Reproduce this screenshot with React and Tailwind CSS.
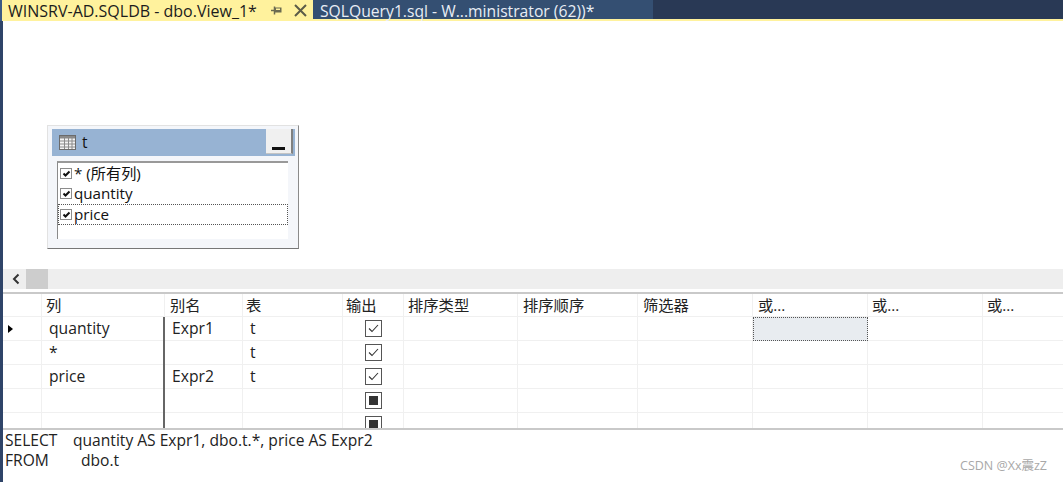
import React from 'react';

const columns = [
  { label: '列', width: 'w-[123px]', pad: 'pl-[4px]' },
  { label: '别名', width: 'w-[78px]', pad: 'pl-[5px]' },
  { label: '表', width: 'w-[100px]', pad: 'pl-[3px]' },
  { label: '输出', width: 'w-[61px]', pad: 'pl-[3px]' },
  { label: '排序类型', width: 'w-[114px]', pad: 'pl-[4px]' },
  { label: '排序顺序', width: 'w-[120px]', pad: 'pl-[5px]' },
  { label: '筛选器', width: 'w-[115px]', pad: 'pl-[5px]' },
  { label: '或...', width: 'w-[115px]', pad: 'pl-[5px]' },
  { label: '或...', width: 'w-[115px]', pad: 'pl-[4px]' },
  { label: '或...', width: 'w-[81px]', pad: 'pl-[4px]' },
];

const rows = [
  { column: 'quantity', alias: 'Expr1', table: 't', output: 'checked', current: true },
  { column: '*', alias: '', table: 't', output: 'checked' },
  { column: 'price', alias: 'Expr2', table: 't', output: 'checked' },
  { column: '', alias: '', table: '', output: 'mixed' },
  { column: '', alias: '', table: '', output: 'mixed' },
];

const TableIcon = () => (
  <svg width="17" height="15" viewBox="0 0 17 15" className="shrink-0">
    <rect x="0.5" y="0.5" width="16" height="14" fill="#f4f4f4" stroke="#6b6b6b" />
    <rect x="1" y="1" width="15" height="2.500" fill="#8a8a8a" />
    <path d="M5.500 1v13M9.500 1v13M13 1v13M1 6h15M1 9h15M1 12h15" stroke="#8a8a8a" />
  </svg>
);

const SmallCheck = () => (
  <span className="w-[12px] h-[11px] shrink-0 border border-[#8c8c8c] bg-white flex items-center justify-center">
    <svg width="9" height="9" viewBox="0 0 9 9">
      <path d="M1.500 4.500 3.500 6.500 7.500 2.500" fill="none" stroke="#111" strokeWidth="2" />
    </svg>
  </span>
);

const OutputBox = ({ state }) => (
  <span className="w-[17px] h-[17px] border border-[#555] bg-white flex items-center justify-center">
    {state === 'checked' ? (
      <svg width="13" height="13" viewBox="0 0 13 13">
        <path d="M2 6.500 5 9.500 11 3" fill="none" stroke="#333" strokeWidth="1.100" />
      </svg>
    ) : (
      <span className="w-[9px] h-[9px] bg-[#333]" />
    )}
  </span>
);

const FieldRow = ({ label, focused }) => (
  <div className={`h-[20.5px] flex items-center border ${focused ? 'border-dotted border-[#555]' : 'border-transparent'} pl-[1px]`}>
    <SmallCheck />
    <span className="ml-[2px] text-[15.2px] leading-none text-[#111]">{label}</span>
  </div>
);

const App = () => {
  return (
    <div className='w-[1063px] h-[482px] overflow-hidden bg-white flex flex-col font-["Open_Sans","Noto_Sans_CJK_SC",sans-serif]'>
      {/* document tabs */}
      <div className="h-[21px] shrink-0 flex bg-[#fff29d]">
        <div className="w-[2px] bg-[#3c5a85]" />
        <div className="w-[311px] flex items-center pl-[6px] text-[16px] text-[#1c1c1c] whitespace-nowrap">
          <span>WINSRV-AD.SQLDB - dbo.View_1*</span>
          <svg width="11" height="9" viewBox="0 0 11 9" className="ml-[14px] shrink-0">
            <path d="M0 4.500h4" fill="none" stroke="#6b6b50" strokeWidth="1.500" />
            <path d="M3.500 0.500v8" fill="none" stroke="#6b6b50" strokeWidth="1.500" />
            <rect x="4" y="1.500" width="6.500" height="5" fill="#6b6b50" />
            <rect x="5" y="2.500" width="4" height="1.500" fill="#fff29d" />
          </svg>
          <svg width="13" height="13" viewBox="0 0 13 13" className="ml-[12px] shrink-0">
            <path d="M1 1 12 12M12 1 1 12" fill="none" stroke="#5c5c48" strokeWidth="2" />
          </svg>
        </div>
        <div className="w-[340px] h-[21px] bg-[#344f72] border-b-2 border-[#fff29d] flex items-start pl-[7px] text-[15.7px] text-[#e8edf5] whitespace-nowrap">
          SQLQuery1.sql - W...ministrator (62))*
        </div>
        <div className="flex-1 h-[19px] bg-[#293955]" />
      </div>

      <div className="flex-1 min-h-0 flex border-l-[3px] border-[#2f4468]">
        <div className="flex-1 min-w-0 flex flex-col">
          {/* diagram pane */}
          <div className="h-[248px] shrink-0 relative">
            <div className="absolute left-[44px] top-[104px] w-[252px] h-[124px] bg-[#f4f6fa] border border-[#e2e2e2] border-r-[#8a8a8a] border-b-[#777] pt-[3px] pl-[4px] pr-[3px]">
              <div className="h-[27px] bg-[#97b3d3] flex items-center pl-[7px] relative">
                <TableIcon />
                <span className="ml-[6px] text-[15.5px] text-[#111]">t</span>
                <div className="absolute right-[2px] top-0 w-[27px] h-[25px] bg-[#f0f0f0] border-r-2 border-b border-r-[#808080] border-b-[#c4c4c4] flex items-end justify-center pb-[3px]">
                  <span className="w-[13px] h-[3px] bg-[#111]" />
                </div>
              </div>
              <div className="mt-[5px] ml-[5px] mr-[7px] h-[78px] bg-white border-l border-t-2 border-[#8a8a8a] border-t-[#999]">
                <FieldRow label="* (所有列)" />
                <FieldRow label="quantity" />
                <FieldRow label="price" focused />
              </div>
            </div>
          </div>

          {/* horizontal scrollbar */}
          <div className="h-[20px] shrink-0 bg-[#eeeeee] flex items-center">
            <svg width="10" height="12" viewBox="0 0 10 12" className="ml-[8px] shrink-0">
              <path d="M7.500 1.500 3 6l4.500 4.500" fill="none" stroke="#333" strokeWidth="2" />
            </svg>
            <span className="ml-[5px] w-[22px] h-[20px] bg-[#cdcdcd]" />
          </div>

          {/* criteria grid */}
          <div className="mt-[3px] h-[138px] shrink-0 overflow-hidden border-y-2 border-[#c9c9c9] text-[15.7px] text-[#222]">
            <div className="flex h-[23px] border-b border-[#f0f0f0] text-[15.3px]">
              <div className="w-[39px] shrink-0 border-r border-[#f0f0f0]" />
              {columns.map((col, i) => (
                <div key={i} className={`${col.width} shrink-0 ${col.pad} flex items-center border-r border-[#f0f0f0] whitespace-nowrap`}>
                  {col.label}
                </div>
              ))}
            </div>
            {rows.map((row, i) => (
              <div key={i} className="flex h-[24px]">
                <div className="w-[39px] shrink-0 border-r border-b border-[#f0f0f0] flex items-center pl-[5px]">
                  {row.current && <span className="w-0 h-0 border-y-[4px] border-y-transparent border-l-[5px] border-l-black" />}
                </div>
                {/* the heavy divider runs unbroken, so the row line sits on an inner box */}
                <div className="w-[123px] shrink-0 border-r-2 border-[#666]">
                  <div className="h-full pl-[7px] flex items-center border-b border-[#f0f0f0]">{row.column}</div>
                </div>
                <div className="w-[78px] shrink-0 pl-[7px] flex items-center border-r border-b border-[#f0f0f0]">{row.alias}</div>
                <div className="w-[100px] shrink-0 pl-[7px] flex items-center border-r border-b border-[#f0f0f0]">{row.table}</div>
                <div className="w-[61px] shrink-0 flex items-center justify-center border-r border-b border-[#f0f0f0]">
                  <OutputBox state={row.output} />
                </div>
                <div className="w-[114px] shrink-0 border-r border-b border-[#f0f0f0]" />
                <div className="w-[120px] shrink-0 border-r border-b border-[#f0f0f0]" />
                <div className="w-[115px] shrink-0 border-r border-b border-[#f0f0f0]" />
                <div className={`w-[115px] shrink-0 ${row.current ? 'bg-[#e8ecf0] border border-dotted border-[#555]' : 'border-r border-b border-[#f0f0f0]'}`} />
                <div className="w-[115px] shrink-0 border-r border-b border-[#f0f0f0]" />
                <div className="flex-1 border-b border-[#f0f0f0]" />
              </div>
            ))}
          </div>

          {/* sql pane */}
          <div className="flex-1 relative pl-[2px] pt-[1px] text-[15.6px] leading-[19.5px] text-[#222]">
            <div className="flex"><span className="w-[68px]">SELECT</span><span>quantity AS Expr1, dbo.t.*, price AS Expr2</span></div>
            <div className="flex"><span className="w-[76px]">FROM</span><span>dbo.t</span></div>
            <span className="absolute right-[16px] bottom-[7px] text-[12.5px] text-[#a8a8a8]">CSDN @Xx震zZ</span>
          </div>
        </div>
      </div>
    </div>
  );
};

export default App;
